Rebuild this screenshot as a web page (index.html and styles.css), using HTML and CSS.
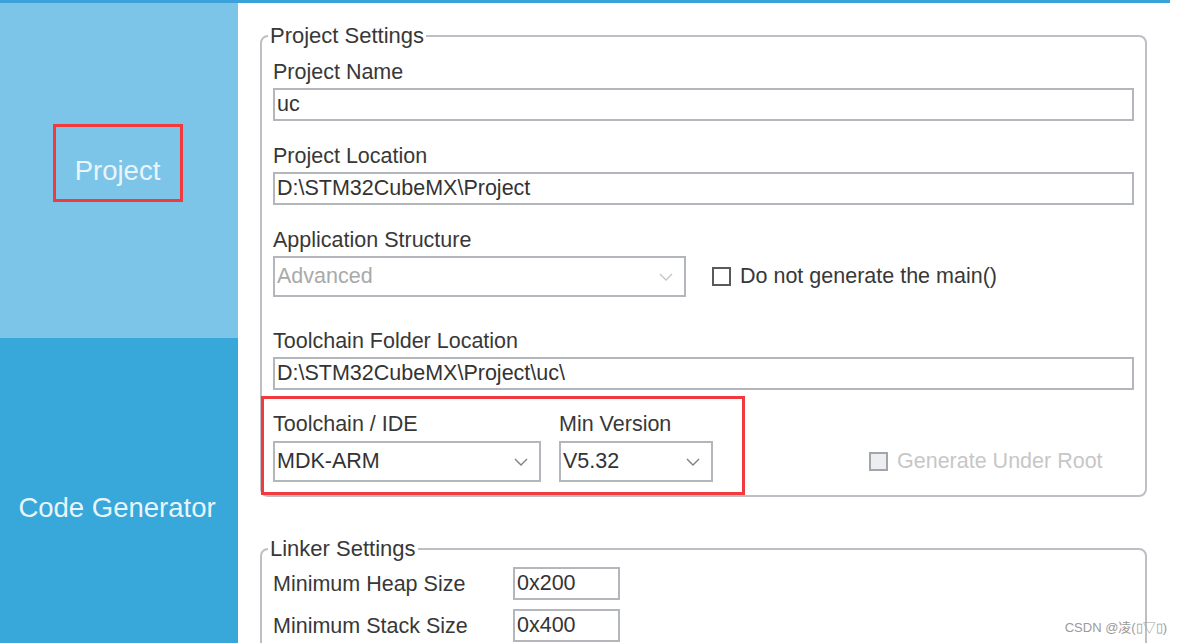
FILE: index.html
```html
<!DOCTYPE html>
<html lang="en">
<head>
  <meta charset="UTF-8" />
  <title>Project Manager</title>
  <link rel="stylesheet" href="styles.css">
</head>
<body>

  <div class="window">
    <aside class="nav">
      <div class="nav-item active"><span class="mark">Project</span></div>
      <div class="nav-item">Code Generator</div>
    </aside>

    <main class="panel">
      <fieldset class="group">
        <legend>Project Settings</legend>

        <div class="field">
          <label>Project Name</label>
          <div class="input">uc</div>
        </div>

        <div class="field">
          <label>Project Location</label>
          <div class="input">D:\STM32CubeMX\Project</div>
        </div>

        <div class="field">
          <label>Application Structure</label>
          <div class="row">
            <div class="select disabled wide">
              <span>Advanced</span>
              <svg width="16" height="10" viewBox="0 0 16 10"><path d="M2 2 L8 8 L14 2" fill="none" stroke="currentColor" stroke-width="1.4"/></svg>
            </div>
            <div class="check">
              <span class="box"></span>
              <span>Do not generate the main()</span>
            </div>
          </div>
        </div>

        <div class="field tall-gap">
          <label>Toolchain Folder Location</label>
          <div class="input">D:\STM32CubeMX\Project\uc\</div>
        </div>

        <div class="row bottom">
          <div class="mark-box">
            <div class="field-inline">
              <label>Toolchain / IDE</label>
              <div class="select ide">
                <span>MDK-ARM</span>
                <svg width="16" height="10" viewBox="0 0 16 10"><path d="M2 2 L8 8 L14 2" fill="none" stroke="currentColor" stroke-width="1.4"/></svg>
              </div>
            </div>
            <div class="field-inline">
              <label>Min Version</label>
              <div class="select version">
                <span>V5.32</span>
                <svg width="16" height="10" viewBox="0 0 16 10"><path d="M2 2 L8 8 L14 2" fill="none" stroke="currentColor" stroke-width="1.4"/></svg>
              </div>
            </div>
          </div>
          <div class="check off">
            <span class="box"></span>
            <span>Generate Under Root</span>
          </div>
        </div>
      </fieldset>

      <fieldset class="group linker">
        <legend>Linker Settings</legend>
        <div class="pair">
          <label>Minimum Heap Size</label>
          <div class="input small">0x200</div>
        </div>
        <div class="pair">
          <label>Minimum Stack Size</label>
          <div class="input small">0x400</div>
        </div>
      </fieldset>
    </main>
  </div>

  <div class="watermark">CSDN @凌(▯▽▯)</div>

</body>
</html>
```

FILE: styles.css
```css
:root {
  --nav-light: #7dc5e8;
  --nav-dark: #38a7da;
  --line: #3aa1da;
  --text: #383838;
  --border: #b3b7bb;
  --frame: #bcc0c4;
  --mark: #f03a3d;
}

html, body {
  margin: 0;
  height: 100%;
  overflow: hidden;
  background: #ffffff;
}

body {
  font-family: 'Liberation Sans', Arial, sans-serif;
  color: var(--text);
  position: relative;
}

.window {
  width: 1170px;
  border-top: 3px solid var(--line);
  display: flex;
}

/* left navigation */
.nav {
  width: 238px;
  flex-shrink: 0;
  display: flex;
  flex-direction: column;
}

.nav-item {
  height: 340px;
  display: flex;
  align-items: center;
  justify-content: center;
  padding-right: 4px;
  background: var(--nav-dark);
  color: #e9f5fb;
  font-size: 27.5px;
}

.nav-item.active {
  height: 335px;
  background: var(--nav-light);
}

.mark {
  border: 3px solid var(--mark);
  padding: 29px 20px 13px 19px;
  margin-bottom: 15px;
  margin-left: 2px;
  line-height: 30px;
}

/* right panel */
.panel {
  flex: 1;
  padding: 20px 23px 0 22px;
}

.group {
  margin: 0;
  border: 2px solid var(--frame);
  border-radius: 8px;
  padding: 11px 11px 0 11px;
}

.group legend {
  font-size: 22px;
  padding: 0 2px;
  margin-left: -5px;
}

label {
  display: block;
  font-size: 21.5px;
  line-height: 24px;
  white-space: nowrap;
}

.field + .field {
  margin-top: 23px;
}

.field.tall-gap {
  margin-top: 32px;
}

.field label {
  margin-bottom: 4px;
}

.input {
  height: 33px;
  box-sizing: border-box;
  border: 2px solid var(--border);
  font-size: 21.5px;
  line-height: 29px;
  padding: 0 2px;
  color: #333333;
  white-space: nowrap;
}

.row {
  display: flex;
  align-items: center;
}

.select {
  height: 41px;
  box-sizing: border-box;
  border: 2px solid var(--border);
  display: flex;
  align-items: center;
  justify-content: space-between;
  padding: 0 10px 0 2px;
  font-size: 21.5px;
  color: #333333;
}

.select svg {
  color: #7d7f82;
}

.select.wide {
  width: 413px;
}

.select.disabled {
  color: #a9a9a9;
}

.select.disabled svg {
  color: #c3c5c7;
}

.select.ide {
  width: 268px;
}

.select.version {
  width: 154px;
}

.check {
  display: flex;
  align-items: center;
  gap: 9px;
  margin-left: 26px;
  font-size: 21.5px;
}

.check .box {
  width: 19px;
  height: 19px;
  box-sizing: border-box;
  border: 2px solid #5a5a5a;
  background: #ffffff;
}

.check.off {
  color: #c7c7c7;
  margin-left: 124px;
  height: 41px;
  margin-bottom: 13px;
}

.check.off .box {
  border-color: #a2a6aa;
  background: #eceef1;
}

.row.bottom {
  align-items: flex-end;
  margin-top: 6px;
}

.mark-box {
  display: flex;
  gap: 18px;
  border: 3px solid var(--mark);
  margin-left: -12px;
  padding: 13px 29px 10px 9px;
}

.field-inline label {
  margin-bottom: 5px;
}

/* linker settings */
.linker {
  margin-top: 39px;
  padding-top: 5px;
  padding-bottom: 60px;
}

.pair {
  display: flex;
  align-items: center;
}

.pair + .pair {
  margin-top: 9px;
}

.pair label {
  width: 240px;
}

.input.small {
  width: 107px;
}

.watermark {
  position: absolute;
  right: 15px;
  bottom: 7px;
  font-family: 'Liberation Sans', 'Noto Sans CJK SC', sans-serif;
  font-size: 13px;
  color: #9a9a9a;
}
```
